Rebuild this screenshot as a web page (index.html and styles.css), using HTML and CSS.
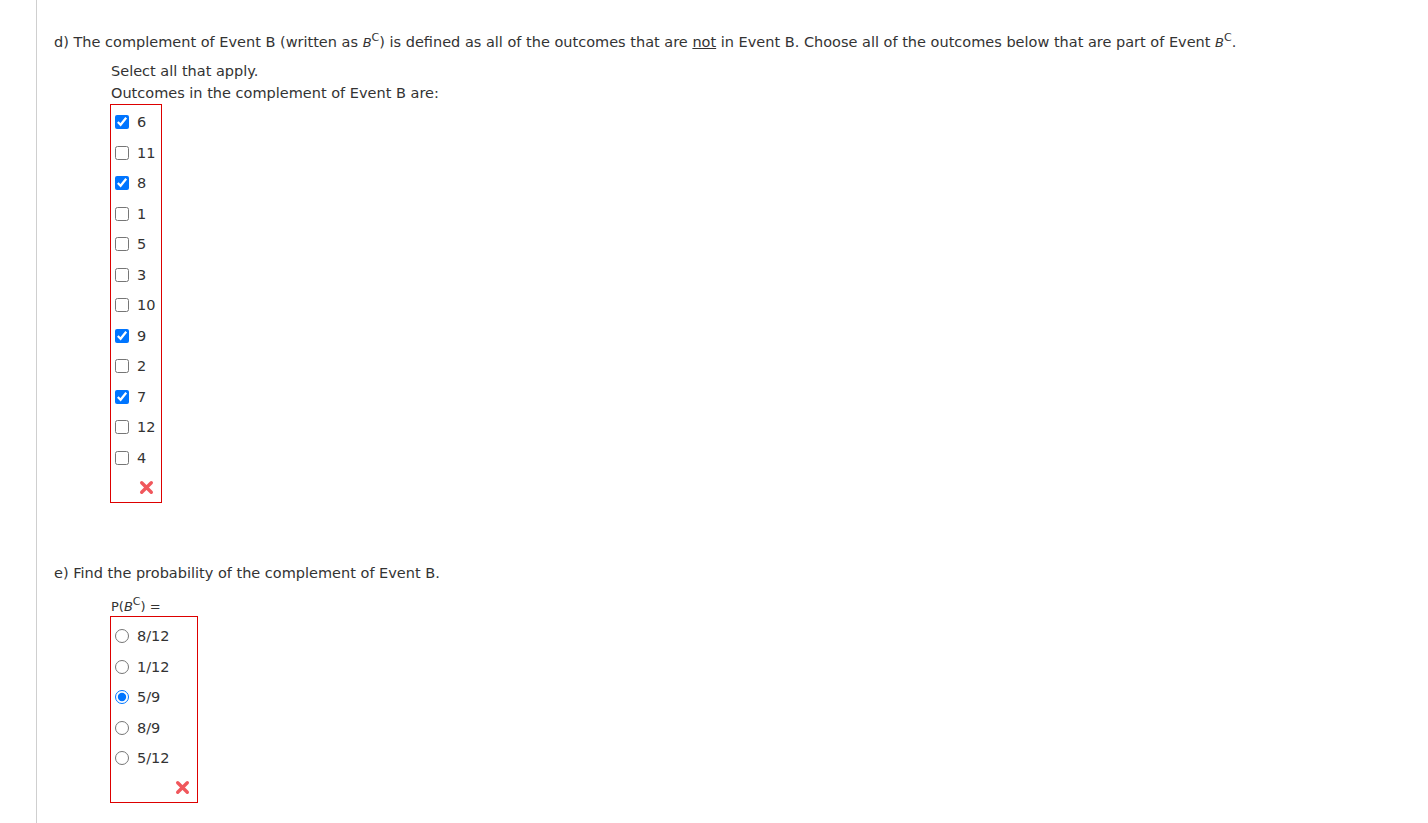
FILE: index.html
```html
<!DOCTYPE html>
<html>
<head>
<meta charset="utf-8">
<link rel="stylesheet" href="styles.css">
</head>
<body>
<div class="page">
  <div class="part part-d">
    <p class="question">d) The complement of Event B (written as <span class="math"><i>B</i><sup>C</sup></span>) is defined as all of the outcomes that are <u>not</u> in Event B. Choose all of the outcomes below that are part of Event <span class="math"><i>B</i><sup>C</sup></span>.</p>
    <div class="answer">
      <p class="line">Select all that apply.</p>
      <p class="line">Outcomes in the complement of Event B are:</p>
      <div class="box box-check">
        <label class="row"><input type="checkbox" checked><span>6</span></label>
        <label class="row"><input type="checkbox"><span>11</span></label>
        <label class="row"><input type="checkbox" checked><span>8</span></label>
        <label class="row"><input type="checkbox"><span>1</span></label>
        <label class="row"><input type="checkbox"><span>5</span></label>
        <label class="row"><input type="checkbox"><span>3</span></label>
        <label class="row"><input type="checkbox"><span>10</span></label>
        <label class="row"><input type="checkbox" checked><span>9</span></label>
        <label class="row"><input type="checkbox"><span>2</span></label>
        <label class="row"><input type="checkbox" checked><span>7</span></label>
        <label class="row"><input type="checkbox"><span>12</span></label>
        <label class="row"><input type="checkbox"><span>4</span></label>
        <div class="mark"><svg width="15" height="15" viewBox="0 0 15 15"><path d="M2.7 2.7 L12.3 12.3 M12.3 2.7 L2.7 12.3" stroke="#f0575c" stroke-width="3.4" stroke-linecap="round"/></svg></div>
      </div>
    </div>
  </div>
  <div class="part part-e">
    <p class="question">e) Find the probability of the complement of Event B.</p>
    <div class="answer">
      <p class="prob">P(<span class="math"><i>B</i><sup>C</sup></span>) =</p>
      <div class="box box-radio">
        <label class="row"><input type="radio" name="p"><span>8/12</span></label>
        <label class="row"><input type="radio" name="p"><span>1/12</span></label>
        <label class="row"><input type="radio" name="p" checked><span>5/9</span></label>
        <label class="row"><input type="radio" name="p"><span>8/9</span></label>
        <label class="row"><input type="radio" name="p"><span>5/12</span></label>
        <div class="mark"><svg width="15" height="15" viewBox="0 0 15 15"><path d="M2.7 2.7 L12.3 12.3 M12.3 2.7 L2.7 12.3" stroke="#f0575c" stroke-width="3.4" stroke-linecap="round"/></svg></div>
      </div>
    </div>
  </div>
</div>
</body>
</html>
```

FILE: styles.css
```css
html, body {
  margin: 0;
  padding: 0;
  background: #fff;
}
body {
  font-family: "DejaVu Sans", Verdana, sans-serif;
  font-size: 14.5px;
  color: #333;
}
.page {
  margin-left: 36px;
  border-left: 1px solid #cfcfcf;
  min-height: 823px;
  padding-left: 17px;
  padding-top: 33px;
  box-sizing: border-box;
}
p {
  margin: 0;
}
.question {
  line-height: 18px;
}
.answer {
  margin-left: 57px;
}
.part-d .answer {
  padding-top: 8px;
}
.line {
  line-height: 22px;
}
.math i {
  font-family: "DejaVu Sans", sans-serif;
  font-style: italic;
  font-size: 13px;
}
.math sup {
  font-size: 11px;
  line-height: 0;
  vertical-align: 6px;
}
.box {
  display: inline-flex;
  flex-direction: column;
  border: 1px solid #dd0000;
  padding-top: 2px;
  margin-left: -1px;
}
.box-check {
  width: 52px;
  box-sizing: border-box;
}
.box-radio {
  width: 88px;
  box-sizing: border-box;
  padding-top: 4px;
}
.box-radio .mark {
  height: 28px;
}
.row {
  display: flex;
  align-items: center;
  height: 30.5px;
}
.row input {
  margin: 0 8px 0 4px;
  width: 14px;
  height: 14px;
  flex: none;
}
.mark {
  height: 29px;
  display: flex;
  align-items: center;
  justify-content: flex-end;
  padding-right: 7px;
}
.part-e {
  margin-top: 61px;
}
.prob {
  font-size: 13px;
  margin-top: 16px;
  line-height: 18px;
  margin-bottom: 0;
}
```
